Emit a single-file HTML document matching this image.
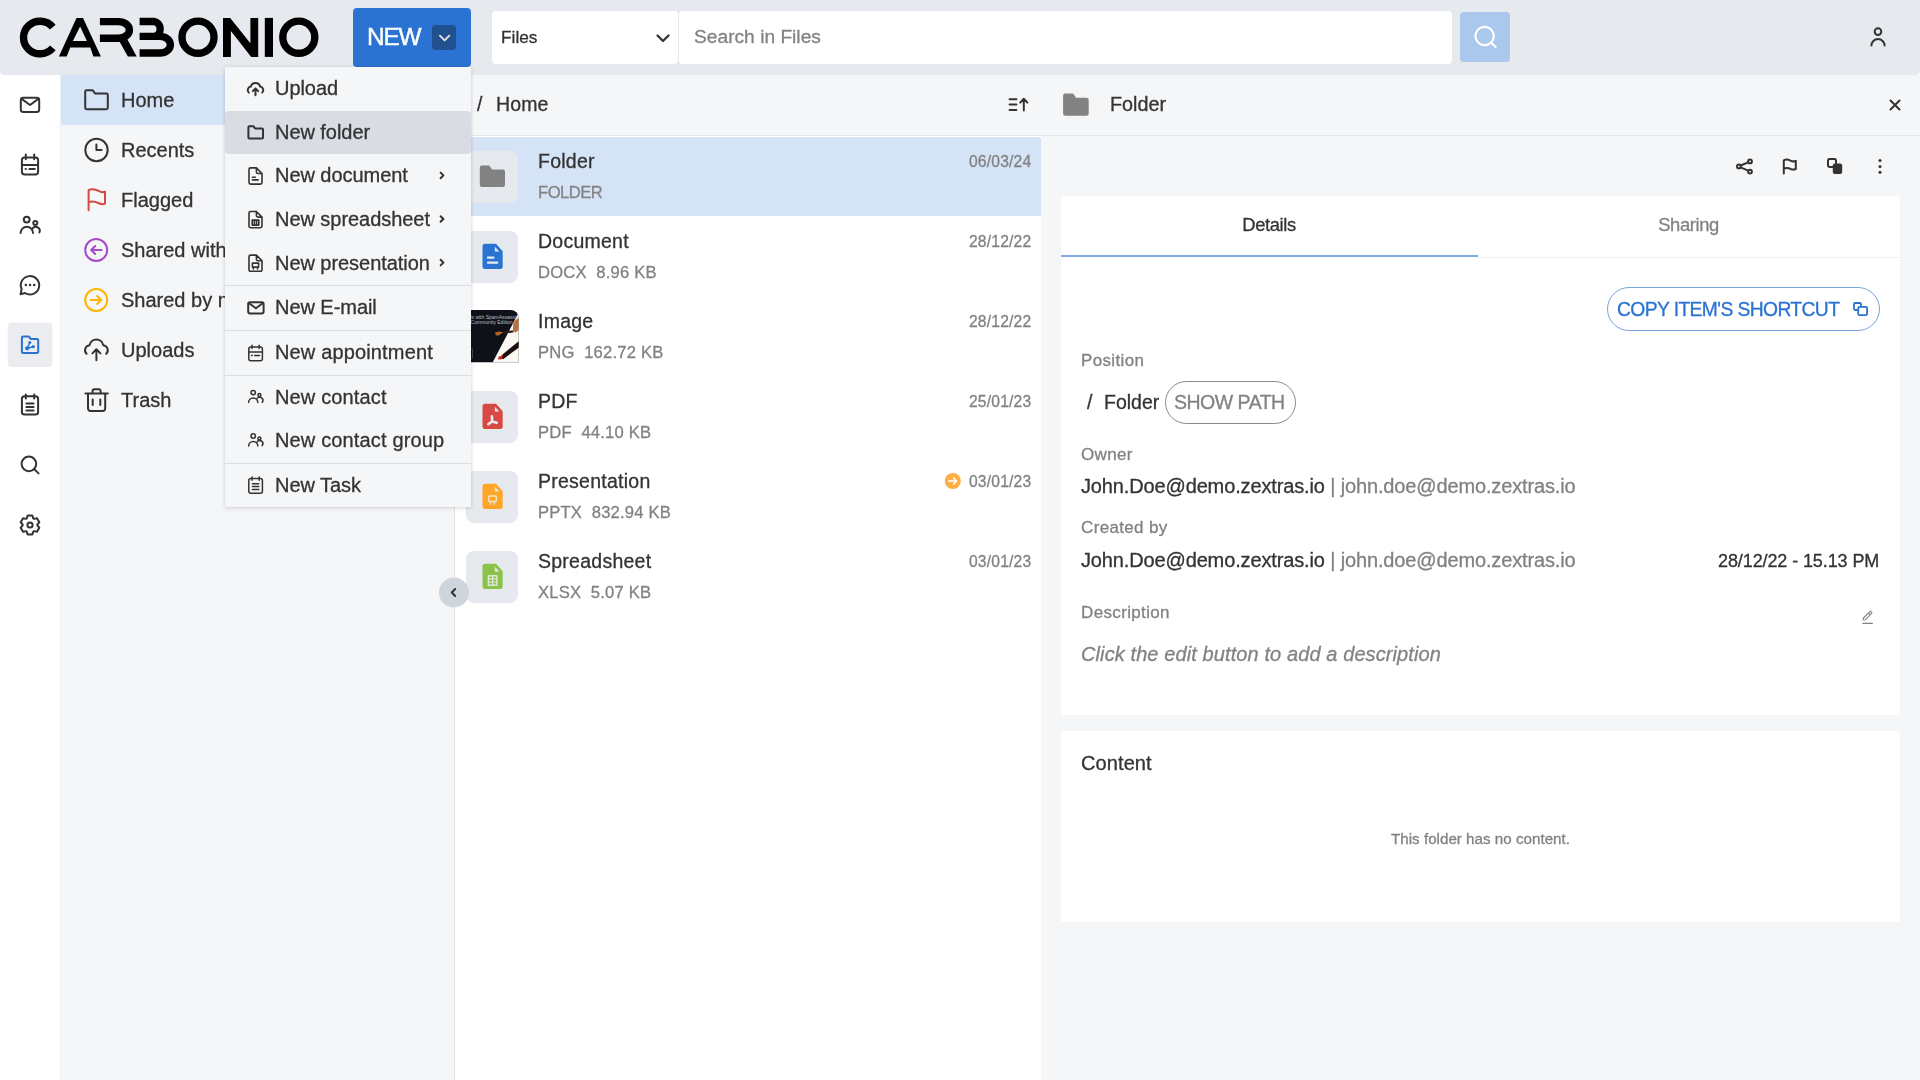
<!DOCTYPE html>
<html><head><meta charset="utf-8">
<style>
*{box-sizing:border-box;margin:0;padding:0}
html,body{width:1920px;height:1080px;overflow:hidden;background:#fff;font-family:"Liberation Sans",sans-serif;color:#333}
.a{position:absolute}
.t{position:absolute;white-space:nowrap;line-height:1;will-change:transform;-webkit-text-stroke:0.3px currentColor}
.g{color:#828282}
svg{position:absolute;overflow:visible}
.ic{fill:none;stroke:#333;stroke-width:2;stroke-linecap:round;stroke-linejoin:round}
</style></head><body>

<!-- HEADER -->
<div class="a" style="left:0;top:0;width:1920px;height:75px;background:#e6e9ee;border-radius:0 0 4px 4px"></div>
<svg style="left:0;top:0" width="340" height="75" viewBox="0 0 340 75">
 <g fill="#000">
  <path d="M58.9,56.6 L76.5,17.9 L83,17.9 L100.9,56.6 L93.4,56.6 L90.3,47.5 L70.2,47.5 L66.7,56.6 Z M80.1,26.6 L72.9,41 L86.9,41 Z" fill-rule="evenodd"/>
  <path d="M117.5,38 L126.6,38 L136.7,56.6 L127.9,56.6 Z"/>
  <path d="M223,17.9 L230.2,17.9 L250.4,43.3 L250.4,17.9 L258.2,17.9 L258.2,56.9 L251.2,56.9 L230.9,31.1 L230.9,56.9 L223,56.9 Z"/>
  <rect x="264.8" y="17.9" width="8.2" height="39"/>
 </g>
 <g fill="none" stroke="#000" stroke-width="7.4">
  <path d="M52.8,27.2 A16.5,16.3 0 1 0 52.8,47.8"/>
  <path d="M99.9,21.6 H118.5 A10.9,8.3 0 0 1 118.5,38.2 H99.9"/>
  <path d="M139.6,21.5 H154 A7,7.5 0 0 1 154,36.4 H139.6 M146,36.4 H160 A10.4,8.3 0 0 1 160,53 H139.6"/>
  <ellipse cx="198" cy="37.2" rx="16" ry="16.1"/>
  <ellipse cx="298.8" cy="37.2" rx="16" ry="16.1"/>
 </g>
</svg>

<!-- NEW button -->
<div class="a" style="left:352.6px;top:8px;width:118.6px;height:58.6px;background:#2b73d2;border-radius:4px"></div>
<div class="t" style="left:367px;top:25.2px;font-size:24.4px;color:#fff;letter-spacing:-1.2px;-webkit-text-stroke:0.4px #fff">NEW</div>
<div class="a" style="left:431.5px;top:25px;width:24.7px;height:24.7px;background:#21508f;border-radius:4px"></div>
<svg style="left:431.5px;top:25px" width="25" height="25"><path d="M7.9,10.7 L12.6,15.4 L17.3,10.7" fill="none" stroke="#e4e4e4" stroke-width="1.9" stroke-linecap="round" stroke-linejoin="round"/></svg>

<!-- search bar -->
<div class="a" style="left:491.5px;top:11.3px;width:186.3px;height:52.5px;background:#fff;border-radius:4px"></div>
<div class="t" style="left:501px;top:28.85px;font-size:17.3px">Files</div>
<svg style="left:650px;top:28px" width="24" height="20"><path d="M7.5,7.5 L13,13 L18.5,7.5" fill="none" stroke="#333" stroke-width="2.3" stroke-linecap="round" stroke-linejoin="round"/></svg>
<div class="a" style="left:679.4px;top:11.4px;width:772.6px;height:52.2px;background:#fff;border-radius:4px"></div>
<div class="t g" style="left:693.8px;top:27px;font-size:19.2px">Search in Files</div>
<div class="a" style="left:1460.4px;top:12.2px;width:50px;height:50px;background:#aac7ed;border-radius:4px"></div>
<svg style="left:1460.4px;top:12.2px" width="50" height="50"><circle cx="24.6" cy="24" r="9.2" fill="none" stroke="#fff" stroke-width="2.2"/><path d="M31.2,30.6 L35.6,35" stroke="#fff" stroke-width="2.2" stroke-linecap="round"/></svg>
<svg style="left:1860px;top:24px" width="36" height="30"><circle cx="18" cy="7.6" r="3.3" class="ic" style="stroke-width:2"/><path d="M11.4,21.6 A6.6,6.6 0 0 1 24.6,21.6" class="ic"/></svg>

<!-- LEFT RAIL -->
<div class="a" style="left:60px;top:75px;width:1px;height:1005px;background:#eceef2"></div>
<svg style="left:0;top:75px" width="60" height="480" viewBox="0 75 60 480">
 <g class="ic">
  <rect x="20.8" y="97.7" width="18.4" height="14.4" rx="2.6"/>
  <path d="M21.3,98.6 L30,105 L38.7,98.6"/>
  <rect x="21.9" y="157.4" width="16.2" height="17" rx="2.6"/>
  <path d="M25.8,154.6 V159.2 M34.2,154.6 V159.2 M22,165 H38 M25.6,168.9 H25.9 M29.4,168.9 H34.8"/>
  <circle cx="26.7" cy="219.6" r="2.9"/>
  <circle cx="35.3" cy="222.9" r="2"/>
  <path d="M20.6,233 A6.2,6.2 0 0 1 33,233 M32.4,228.6 A4,4 0 0 1 39.4,232.4"/>
  <path d="M20.6,294.2 L21.6,289 A9.2,9.2 0 1 1 25,293 Z"/>
  <path d="M25.8,285 H25.9 M30,285 H30.1 M34.2,285 H34.3" stroke-width="2.4"/>
  <rect x="21.9" y="396.2" width="16.2" height="18.4" rx="2.6"/>
  <path d="M25.8,394.6 V398.6 M34.2,394.6 V398.6 M26.4,403.4 H33.6 M26.4,407 H33.6 M26.4,410.6 H33.6"/>
  <circle cx="28.9" cy="463.9" r="7.3"/>
  <path d="M34.2,469.2 L38.6,473.4"/>
  <path d="M26.76,518.35 L27.65,515.59 L32.35,515.59 L33.24,518.35 L34.14,518.87 L36.98,518.26 L39.32,522.33 L37.38,524.48 L37.38,525.52 L39.32,527.67 L36.98,531.74 L34.14,531.13 L33.24,531.65 L32.35,534.41 L27.65,534.41 L26.76,531.65 L25.86,531.13 L23.02,531.74 L20.68,527.67 L22.62,525.52 L22.62,524.48 L20.68,522.33 L23.02,518.26 L25.86,518.87 Z"/>
  <circle cx="30" cy="525" r="2.6"/>
 </g>
 <rect x="7.8" y="322.6" width="44.4" height="44.4" rx="4" fill="#e6e9ee" style="fill:#eaecf0"/>
 <g fill="none" stroke="#2b73d2" stroke-width="2" stroke-linejoin="round" stroke-linecap="round">
  <path d="M21.9,337.6 A1.2,1.2 0 0 1 23.1,336.4 H28.6 L30.8,339 H37 A1.2,1.2 0 0 1 38.2,340.2 V351.8 A1.2,1.2 0 0 1 37,353 H23.1 A1.2,1.2 0 0 1 21.9,351.8 Z"/>
  <path d="M27.2,348.3 L29.8,342.8 M27.2,348.3 L33.1,346.7" stroke-width="1.4"/>
 </g>
 <g fill="#2b73d2"><circle cx="27.2" cy="348.3" r="2.1"/><circle cx="29.8" cy="342.6" r="1.5"/><circle cx="33.3" cy="346.7" r="1.6"/></g>
</svg>

<!-- SIDEBAR -->
<div class="a" style="left:61px;top:75px;width:393px;height:1005px;background:#f5f6f8"></div>
<div class="a" style="left:454px;top:75px;width:1px;height:1005px;background:#dfe3e8"></div>
<div class="a" style="left:61px;top:75px;width:393px;height:49.5px;background:#d5e3f6;border-radius:0 0 0 3px"></div>
<div class="t" style="left:121px;top:90.1px;font-size:20px">Home</div>
<div class="t" style="left:121px;top:140.1px;font-size:20px">Recents</div>
<div class="t" style="left:121px;top:190.1px;font-size:20px">Flagged</div>
<div class="t" style="left:121px;top:240.1px;font-size:20px">Shared with me</div>
<div class="t" style="left:121px;top:290.1px;font-size:20px">Shared by me</div>
<div class="t" style="left:121px;top:340.1px;font-size:20px">Uploads</div>
<div class="t" style="left:121px;top:390.1px;font-size:20px">Trash</div>
<svg style="left:61px;top:75px" width="60" height="360" viewBox="61 75 60 360">
 <g class="ic">
  <path d="M85.2,91.6 A1.4,1.4 0 0 1 86.6,90.2 H92.6 L95.2,93.6 H106.4 A1.4,1.4 0 0 1 107.8,95 V107.8 A1.4,1.4 0 0 1 106.4,109.2 H86.6 A1.4,1.4 0 0 1 85.2,107.8 Z"/>
  <circle cx="96.5" cy="150" r="11.2"/>
  <path d="M96.4,144.6 V150 H101.6"/>
  <path d="M86.6,353.8 A5,5 0 0 1 89.6,345.2 A6.9,6.9 0 0 1 103.2,345.2 A5,5 0 0 1 106.2,353.8 M96.4,360.2 V349.4 M92.4,353.4 L96.4,349.2 L100.4,353.4"/>
  <path d="M85.4,393.6 H107.8 M92.6,393.6 V391 A1.8,1.8 0 0 1 94.4,389.2 H98.8 A1.8,1.8 0 0 1 100.6,391 V393.6 M88,393.6 V408.6 A2.4,2.4 0 0 0 90.4,411 H102.8 A2.4,2.4 0 0 0 105.2,408.6 V393.6 M92.7,399.6 V405 M100.3,399.6 V405"/>
 </g>
 <g fill="none" stroke="#d74942" stroke-width="2" stroke-linecap="round" stroke-linejoin="round">
  <path d="M88.6,210.2 V190.2 C93,187.6 97,190 99.6,191.4 C101.6,192.4 103.8,192.4 105,191.6 V203.6 C103,204.6 100.8,204.2 98.2,203 C95,201.4 92,200.6 88.6,202.4"/>
 </g>
 <g fill="none" stroke="#a64ac9" stroke-width="2" stroke-linecap="round" stroke-linejoin="round">
  <circle cx="96.2" cy="250" r="11"/><path d="M101.6,250 H91.4 M95.2,246 L91.2,250 L95.2,254"/>
 </g>
 <g fill="none" stroke="#ffb400" stroke-width="2" stroke-linecap="round" stroke-linejoin="round">
  <circle cx="96.2" cy="300" r="11"/><path d="M90.8,300 H101 M97.2,296 L101.2,300 L97.2,304"/>
 </g>
</svg>

<div class="a" style="left:455px;top:75px;width:586px;height:61px;background:#f5f6f8;border-bottom:1px solid #e3e6ea"></div>
<div class="t" style="left:477px;top:95.4px;font-size:19.5px">/</div>
<div class="t" style="left:495.5px;top:95.4px;font-size:19.5px;letter-spacing:0.1px">Home</div>
<svg style="left:1000px;top:90px" width="36" height="30" viewBox="1000 90 36 30"><g class="ic" stroke-width="2.2"><path d="M1009.6,99.2 H1016.4 M1009.6,104.6 H1016.4 M1009.6,110 H1016.4 M1023.8,110.4 V99 M1020.2,102.6 L1023.8,98.8 L1027.4,102.6"/></g></svg>
<div class="a" style="left:455px;top:136.5px;width:586px;height:79.5px;background:#d5e3f6;border-radius:0 3px 0 0"></div>
<div class="a" style="left:466px;top:150.5px;width:52.4px;height:52.2px;background:#e6e9ee;border-radius:8px"></div>
<div class="t" style="left:537.8px;top:151.8px;font-size:19.5px;letter-spacing:0.25px">Folder</div>
<div class="t g" style="left:538px;top:185.3px;font-size:16.6px;letter-spacing:-0.5px">FOLDER</div>
<div class="t g" style="right:889px;top:154.0px;font-size:15.6px;letter-spacing:0.2px">06/03/24</div>
<div class="a" style="left:466px;top:230.5px;width:52.4px;height:52.2px;background:#e6e9ee;border-radius:8px"></div>
<div class="t" style="left:537.8px;top:231.8px;font-size:19.5px;letter-spacing:0.25px">Document</div>
<div class="t g" style="left:538px;top:265.3px;font-size:16.6px;letter-spacing:0.2px">DOCX&nbsp;&nbsp;8.96 KB</div>
<div class="t g" style="right:889px;top:234.0px;font-size:15.6px;letter-spacing:0.2px">28/12/22</div>
<div class="t" style="left:537.8px;top:311.8px;font-size:19.5px;letter-spacing:0.25px">Image</div>
<div class="t g" style="left:538px;top:345.3px;font-size:16.6px;letter-spacing:0.2px">PNG&nbsp;&nbsp;162.72 KB</div>
<div class="t g" style="right:889px;top:314.0px;font-size:15.6px;letter-spacing:0.2px">28/12/22</div>
<div class="a" style="left:466px;top:390.5px;width:52.4px;height:52.2px;background:#e6e9ee;border-radius:8px"></div>
<div class="t" style="left:537.8px;top:391.8px;font-size:19.5px;letter-spacing:0.25px">PDF</div>
<div class="t g" style="left:538px;top:425.3px;font-size:16.6px;letter-spacing:0.2px">PDF&nbsp;&nbsp;44.10 KB</div>
<div class="t g" style="right:889px;top:394.0px;font-size:15.6px;letter-spacing:0.2px">25/01/23</div>
<div class="a" style="left:466px;top:470.5px;width:52.4px;height:52.2px;background:#e6e9ee;border-radius:8px"></div>
<div class="t" style="left:537.8px;top:471.8px;font-size:19.5px;letter-spacing:0.25px">Presentation</div>
<div class="t g" style="left:538px;top:505.3px;font-size:16.6px;letter-spacing:0.2px">PPTX&nbsp;&nbsp;832.94 KB</div>
<div class="t g" style="right:889px;top:474.0px;font-size:15.6px;letter-spacing:0.2px">03/01/23</div>
<div class="a" style="left:466px;top:550.5px;width:52.4px;height:52.2px;background:#e6e9ee;border-radius:8px"></div>
<div class="t" style="left:537.8px;top:551.8px;font-size:19.5px;letter-spacing:0.25px">Spreadsheet</div>
<div class="t g" style="left:538px;top:585.3px;font-size:16.6px;letter-spacing:0.2px">XLSX&nbsp;&nbsp;5.07 KB</div>
<div class="t g" style="right:889px;top:554.0px;font-size:15.6px;letter-spacing:0.2px">03/01/23</div>
<svg style="left:470px;top:150px" width="50" height="52" viewBox="470 150 50 52"><path d="M481.8,165.6 H488.6 A1.6,1.6 0 0 1 489.9,166.3 L492,169.6 H503 A2,2 0 0 1 505,171.6 V185.1 A2,2 0 0 1 503,187.1 H481.8 A2,2 0 0 1 479.8,185.1 V167.6 A2,2 0 0 1 481.8,165.6 Z" fill="#828282"/></svg>
<svg style="left:470px;top:230px" width="50" height="52" viewBox="470 230 50 52"><path d="M485.3,243.8 H496.0 L502.7,251.20000000000002 V266.2 A2.8,2.8 0 0 1 499.9,269.0 H485.3 A2.8,2.8 0 0 1 482.5,266.2 V246.60000000000002 A2.8,2.8 0 0 1 485.3,243.8 Z" fill="#2b73d2"/><path d="M494.9,246.70000000000002 V251.60000000000002 H499.3 Z" fill="#e6e9ee"/><path d="M487.9,257.7 H493.5 M487.9,262.7 H497.3" stroke="#e6e9ee" stroke-width="2.2" stroke-linecap="round"/></svg>
<svg style="left:470px;top:390px" width="50" height="52" viewBox="470 390 50 52"><path d="M485.3,403.8 H496.0 L502.7,411.2 V426.2 A2.8,2.8 0 0 1 499.9,429.0 H485.3 A2.8,2.8 0 0 1 482.5,426.2 V406.6 A2.8,2.8 0 0 1 485.3,403.8 Z" fill="#d74942"/><path d="M494.9,406.7 V411.6 H499.3 Z" fill="#e6e9ee"/><path d="M492.1,421.40000000000003 L491.9,416.40000000000003 M492.1,421.40000000000003 L488.3,424.2 M492.1,421.40000000000003 L496.7,422.8" stroke="#e6e9ee" stroke-width="2.6" stroke-linecap="round"/></svg>
<svg style="left:470px;top:470px" width="50" height="52" viewBox="470 470 50 52"><path d="M485.3,483.8 H496.0 L502.7,491.2 V506.2 A2.8,2.8 0 0 1 499.9,509.0 H485.3 A2.8,2.8 0 0 1 482.5,506.2 V486.6 A2.8,2.8 0 0 1 485.3,483.8 Z" fill="#ffa629"/><path d="M494.9,486.7 V491.6 H499.3 Z" fill="#e6e9ee"/><rect x="488.7" y="496.0" width="7.6" height="5.4" rx="1.2" fill="none" stroke="#f3e3c8" stroke-width="1.5"/><path d="M490.7,501.6 L490.3,504.6 M494.1,501.6 L494.5,504.6" stroke="#f3e3c8" stroke-width="1.4"/></svg>
<svg style="left:470px;top:550px" width="50" height="52" viewBox="470 550 50 52"><path d="M485.3,563.8 H496.0 L502.7,571.1999999999999 V586.2 A2.8,2.8 0 0 1 499.9,589.0 H485.3 A2.8,2.8 0 0 1 482.5,586.2 V566.5999999999999 A2.8,2.8 0 0 1 485.3,563.8 Z" fill="#8bc34a"/><path d="M494.9,566.6999999999999 V571.5999999999999 H499.3 Z" fill="#e6e9ee"/><rect x="488.4" y="575.8" width="8.4" height="9.4" fill="none" stroke="#e2ecd6" stroke-width="1.4"/><path d="M492.6,575.8 V585.1999999999999 M488.4,578.9 H496.8 M488.4,582.0 H496.8" stroke="#e2ecd6" stroke-width="1.2"/></svg>
<svg style="left:466px;top:309px" width="53" height="54" viewBox="466 309 53 54"><defs><clipPath id="imc"><path d="M466,310 H510.7 A8,8 0 0 1 518.7,318 V362.3 H466 Z"/></clipPath></defs><g clip-path="url(#imc)"><rect x="466" y="310" width="53" height="53" fill="#0e1118"/><path d="M517.6,314.6 L492.6,362.5 H519 V314 Z" fill="#fbf8f4"/><path d="M519,341 L511,347.5 L502,355 L499.5,358.5 L503.5,359 L512,352.5 L519,347.5 Z" fill="#16110e"/><path d="M498.6,356.6 L503.4,355.6 L501.6,359.2 L498,359.4 Z" fill="#d3262a"/><path d="M495,332.6 L499,331.4 L503.5,332.2 L498.5,335.6 L495.8,335.2 Z" fill="#c86f24" opacity="0.9"/><path d="M503,331.2 L512.6,330.4 L514,332.2 L505,333.6 Z" fill="#2a1a10"/><path d="M513.4,323 L516,319.6 L519,318 V330 L515.6,332.6 L512.8,331 Z" fill="#a75a22" opacity="0.85"/><text x="470.4" y="319.4" font-family="Liberation Sans" font-size="5" fill="#b9bec6">ls with SpamAssassin</text><text x="470.6" y="324.4" font-family="Liberation Sans" font-size="5" fill="#b9bec6">Community Edition</text><rect x="466.5" y="349" width="6" height="9" fill="none" stroke="#555" stroke-width="0.8"/></g></svg>

<svg style="left:940px;top:469px" width="26" height="24" viewBox="940 469 26 24"><circle cx="952.8" cy="481" r="8" fill="#ffae45"/><path d="M948.6,481 H956.6 M953.6,478 L956.6,481 L953.6,484" fill="none" stroke="#fff" stroke-width="1.7" stroke-linecap="round" stroke-linejoin="round"/></svg>
<svg style="left:436px;top:575px" width="36" height="36" viewBox="436 575 36 36"><circle cx="453.9" cy="592.5" r="15" fill="#cfd5dc"/><path d="M455.2,589 L451.8,592.5 L455.2,596" fill="none" stroke="#333" stroke-width="2" stroke-linecap="round" stroke-linejoin="round"/></svg>
<div class="a" style="left:1041px;top:75px;width:879px;height:1005px;background:#f5f6f8"></div>
<div class="a" style="left:1041px;top:134.8px;width:879px;height:1px;background:#e3e6eb"></div>
<svg style="left:1060px;top:90px" width="32" height="30" viewBox="1060 90 32 30"><path d="M1065.3,93.5 H1072.4 A1.6,1.6 0 0 1 1073.7,94.2 L1076,97.7 H1086.5 A2.2,2.2 0 0 1 1088.7,99.9 V113.5 A2.2,2.2 0 0 1 1086.5,115.7 H1065.3 A2.2,2.2 0 0 1 1063.1,113.5 V95.7 A2.2,2.2 0 0 1 1065.3,93.5 Z" fill="#828282"/></svg>
<div class="t" style="left:1110.4px;top:95.3px;font-size:19.75px">Folder</div>
<svg style="left:1884px;top:94px" width="22" height="22" viewBox="1884 94 22 22"><path d="M1890.5,100.5 L1899.5,109.5 M1899.5,100.5 L1890.5,109.5" class="ic" stroke-width="1.5"/></svg>
<svg style="left:1730px;top:152px" width="160" height="30" viewBox="1730 152 160 30"><g class="ic" stroke-width="1.8">
<circle cx="1750" cy="161.4" r="1.9"/><circle cx="1738.9" cy="166.4" r="1.9"/><circle cx="1750" cy="171.6" r="1.9"/>
<path d="M1740.6,165.5 L1748.2,162.3 M1740.6,167.3 L1748.2,170.7"/>
<path d="M1783.8,173.6 V160.4 C1786.4,159 1788.6,159.6 1790.4,160.6 C1792.4,161.6 1794.2,161.6 1795.8,160.8 V169 C1794.2,169.8 1792.4,169.8 1790.4,168.8 C1788.6,167.8 1786.4,167.6 1783.8,168.6"/>
<path d="M1832.6,167 H1829.4 A1.4,1.4 0 0 1 1828,165.6 V160.4 A1.4,1.4 0 0 1 1829.4,159 H1834.6 A1.4,1.4 0 0 1 1836,160.4 V163.2"/>
</g>
<rect x="1832.8" y="163.6" width="9.4" height="10.3" rx="2" fill="#333"/>
<circle cx="1880" cy="160.6" r="1.5" fill="#333"/><circle cx="1880" cy="166.4" r="1.5" fill="#333"/><circle cx="1880" cy="172.2" r="1.5" fill="#333"/>
</svg>
<div class="a" style="left:1061px;top:196.4px;width:839px;height:518.6px;background:#fff;border-radius:2px"></div>
<div class="a" style="left:1477.6px;top:256.5px;width:422.4px;height:1.4px;background:#edf0f3"></div>
<div class="a" style="left:1061px;top:254.8px;width:416.6px;height:2.3px;background:#80a9df"></div>
<div class="t" style="left:1061px;width:416px;text-align:center;top:216.1px;font-size:18.4px;letter-spacing:-0.4px">Details</div>
<div class="t g" style="left:1477px;width:423px;text-align:center;top:216.1px;font-size:18.4px;letter-spacing:-0.4px">Sharing</div>
<div class="a" style="left:1606.7px;top:287px;width:273.3px;height:43.5px;border:1.3px solid #79a4de;border-radius:22px"></div>
<div class="t" style="left:1616.5px;top:299.5px;font-size:19.3px;color:#2b73d2;letter-spacing:-0.6px">COPY ITEM&#39;S SHORTCUT</div>
<svg style="left:1850px;top:298px" width="22" height="22" viewBox="1850 298 22 22"><g fill="none" stroke="#2b73d2" stroke-width="1.8" stroke-linejoin="round"><path d="M1857.6,310 H1855.2 A1.2,1.2 0 0 1 1854,308.8 V304.2 A1.2,1.2 0 0 1 1855.2,303 H1859.8 A1.2,1.2 0 0 1 1861,304.2 V306.4"/><rect x="1858.2" y="306.8" width="8.9" height="8.4" rx="1.4"/></g></svg>
<div class="t g" style="left:1080.6px;top:352px;font-size:17px;letter-spacing:0.35px">Position</div>
<div class="t" style="left:1087.2px;top:392.8px;font-size:19.5px">/</div>
<div class="t" style="left:1103.6px;top:392.8px;font-size:19.5px">Folder</div>
<div class="a" style="left:1165.2px;top:381.2px;width:131.1px;height:42.5px;border:1px solid #8a8a8a;border-radius:22px"></div>
<div class="t g" style="left:1173.8px;top:392.8px;font-size:19.5px;letter-spacing:-0.5px">SHOW PATH</div>
<div class="t g" style="left:1080.6px;top:445.6px;font-size:17px;letter-spacing:0.35px">Owner</div>
<div class="t" style="left:1081.2px;top:476.1px;font-size:20px;letter-spacing:-0.14px">John.Doe@demo.zextras.io <span class="g">| john.doe@demo.zextras.io</span></div>
<div class="t g" style="left:1080.6px;top:519.3px;font-size:17px;letter-spacing:0.35px">Created by</div>
<div class="t" style="left:1081.2px;top:550px;font-size:20px;letter-spacing:-0.14px">John.Doe@demo.zextras.io <span class="g">| john.doe@demo.zextras.io</span></div>
<div class="t" style="right:40.5px;top:552.2px;font-size:18px;letter-spacing:-0.1px">28/12/22 - 15.13 PM</div>
<div class="t g" style="left:1080.6px;top:603.6px;font-size:17px;letter-spacing:0.35px">Description</div>
<svg style="left:1858px;top:607px" width="20" height="20" viewBox="1858 607 20 20"><g fill="none" stroke="#828282" stroke-width="1.1" stroke-linejoin="round" stroke-linecap="round"><path d="M1863.4,620 L1863.4,618 L1869.6,611.8 A1.2,1.2 0 0 1 1871.4,611.8 A1.2,1.2 0 0 1 1871.4,613.6 L1865.2,619.8 Z M1868.4,613 L1870.2,614.8"/><path d="M1862.8,623.4 H1872.4"/></g></svg>
<div class="t g" style="left:1081px;top:644.1px;font-size:20px;font-style:italic;letter-spacing:0.1px">Click the edit button to add a description</div>
<div class="a" style="left:1061px;top:730.7px;width:839px;height:190.9px;background:#fff;border-radius:2px"></div>
<div class="t" style="left:1080.8px;top:753.1px;font-size:20px;letter-spacing:0.1px">Content</div>
<div class="t g" style="left:1061px;width:839px;text-align:center;top:830.8px;font-size:15.2px">This folder has no content.</div>

<div class="a" style="left:224.8px;top:66.8px;width:246.7px;height:440px;background:#f5f6f8;box-shadow:0 0 4px rgba(0,0,0,0.12),0 2px 5px rgba(0,0,0,0.08)"></div>
<div class="a" style="left:224.8px;top:110.7px;width:246.7px;height:43px;background:#d9dde3;border-radius:4px"></div>
<div class="a" style="left:224.8px;top:284.5px;width:246.7px;height:1.2px;background:#d9dde4"></div>
<div class="a" style="left:224.8px;top:329.6px;width:246.7px;height:1.2px;background:#d9dde4"></div>
<div class="a" style="left:224.8px;top:374.7px;width:246.7px;height:1.2px;background:#d9dde4"></div>
<div class="a" style="left:224.8px;top:462.9px;width:246.7px;height:1.2px;background:#d9dde4"></div>
<div class="t" style="left:275.4px;top:78.17px;font-size:20px;letter-spacing:-0.05px">Upload</div>
<div class="t" style="left:275.4px;top:121.87px;font-size:20px;letter-spacing:-0.05px">New folder</div>
<div class="t" style="left:275.4px;top:165.47px;font-size:20px;letter-spacing:-0.05px">New document</div>
<div class="t" style="left:275.4px;top:209.07px;font-size:20px;letter-spacing:-0.05px">New spreadsheet</div>
<div class="t" style="left:275.4px;top:252.77px;font-size:20px;letter-spacing:-0.05px">New presentation</div>
<div class="t" style="left:275.4px;top:297.47px;font-size:20px;letter-spacing:-0.05px">New E-mail</div>
<div class="t" style="left:275.4px;top:341.97px;font-size:20px;letter-spacing:0.15px">New appointment</div>
<div class="t" style="left:275.4px;top:386.87px;font-size:20px;letter-spacing:0.15px">New contact</div>
<div class="t" style="left:275.4px;top:430.17px;font-size:20px;letter-spacing:0.15px">New contact group</div>
<div class="t" style="left:275.4px;top:475.27px;font-size:20px;letter-spacing:-0.05px">New Task</div>
<svg style="left:225px;top:66px" width="250" height="445" viewBox="225 66 250 445"><g class="ic" stroke-width="1.6">
<path d="M440.6,172.6 L443.4,175.4 L440.6,178.2 M440.6,216.2 L443.4,219 L440.6,221.8 M440.6,259.8 L443.4,262.6 L440.6,265.4"/>
<path d="M248.8,92.6 A3.5,3.5 0 0 1 250.8,86.6 A4.9,4.9 0 0 1 260.2,86.6 A3.5,3.5 0 0 1 262.2,92.6 M255.5,95.2 V88.4 M252.8,91.1 L255.5,88.4 L258.2,91.1"/>
<path d="M248.4,127.2 A1,1 0 0 1 249.4,126.2 H253.4 L255,128.4 H262 A1,1 0 0 1 263,129.4 V137.6 A1,1 0 0 1 262,138.6 H249.4 A1,1 0 0 1 248.4,137.6 Z"/>
<g stroke-width="1.6">
<path d="M250.6,167.9 H256.4 L262,173.5 V182.5 A1.6,1.6 0 0 1 260.4,184.1 H250.6 A1.6,1.6 0 0 1 249,182.5 V169.5 A1.6,1.6 0 0 1 250.6,167.9 Z M256.4,167.9 V171.70000000000002 A1.6,1.6 0 0 0 258,173.5 H262 M252.4,177.3 H255.4 M252.4,179.9 H258.2"/>
<path d="M250.6,211.5 H256.4 L262,217.1 V226.1 A1.6,1.6 0 0 1 260.4,227.7 H250.6 A1.6,1.6 0 0 1 249,226.1 V213.1 A1.6,1.6 0 0 1 250.6,211.5 Z M256.4,211.5 V215.3 A1.6,1.6 0 0 0 258,217.1 H262 M252.2,220.1 H258.8 V225.1 H252.2 Z M254.4,220.1 V225.1 M256.6,220.1 V225.1"/>
<path d="M250.6,255.1 H256.4 L262,260.7 V269.7 A1.6,1.6 0 0 1 260.4,271.3 H250.6 A1.6,1.6 0 0 1 249,269.7 V256.7 A1.6,1.6 0 0 1 250.6,255.1 Z M256.4,255.1 V258.9 A1.6,1.6 0 0 0 258,260.7 H262 M252.4,263.1 H258.6 V267.1 H252.4 Z M253.8,267.1 L253.4,268.9 M257.2,267.1 L257.6,268.9"/>
</g>
<rect x="248.2" y="302.2" width="15.4" height="11.2" rx="1.8"/>
<path d="M248.8,303 L255.9,308.2 L263,303"/>
<g stroke-width="1.5">
<rect x="248.8" y="347" width="13.6" height="13.8" rx="2"/>
<path d="M252,345.2 V348.4 M259.2,345.2 V348.4 M248.8,352 H262.4 M251.6,355.6 H252.2 M254.6,355.6 H259.6"/>
</g>
<g stroke-width="1.5">
<circle cx="253.2" cy="392.6" r="2.2"/><circle cx="259.4" cy="395" r="1.5"/>
<path d="M248.6,402.6 A4.6,4.6 0 0 1 257.8,402.6 M257.2,398.4 A3,3 0 0 1 262.2,402.2"/>
<circle cx="253.2" cy="436" r="2.2"/><circle cx="259.4" cy="438.4" r="1.5"/>
<path d="M248.6,446 A4.6,4.6 0 0 1 257.8,446 M257.2,441.8 A3,3 0 0 1 262.2,445.6"/>
</g>
<g stroke-width="1.5">
<rect x="248.8" y="478.6" width="13.6" height="14.6" rx="2"/>
<path d="M252,477 V480.2 M259.2,477 V480.2 M252.4,483.8 H258.8 M252.4,486.6 H258.8 M252.4,489.4 H258.8"/>
</g>
</g></svg>

</body></html>
